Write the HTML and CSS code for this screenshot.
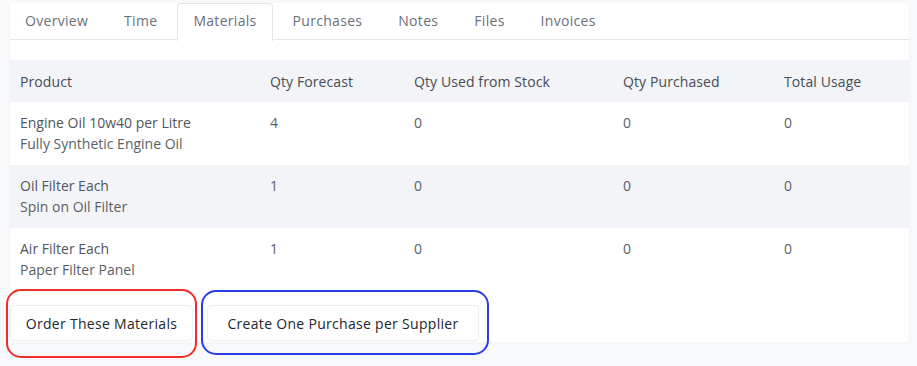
FILE: index.html
```html
<!DOCTYPE html>
<html>
<head>
<meta charset="utf-8">
<link rel="stylesheet" href="styles.css">
</head>
<body>
<div class="card">
  <div class="tabs">
    <div class="tab">Overview</div>
    <div class="tab">Time</div>
    <div class="tab active">Materials</div>
    <div class="tab">Purchases</div>
    <div class="tab">Notes</div>
    <div class="tab">Files</div>
    <div class="tab">Invoices</div>
  </div>
  <table class="materials">
    <thead>
      <tr>
        <th class="c1">Product</th>
        <th class="c2">Qty Forecast</th>
        <th class="c3">Qty Used from Stock</th>
        <th class="c4">Qty Purchased</th>
        <th class="c5">Total Usage</th>
      </tr>
    </thead>
    <tbody>
      <tr>
        <td><div>Engine Oil 10w40 per Litre</div><div>Fully Synthetic Engine Oil</div></td>
        <td>4</td><td>0</td><td>0</td><td>0</td>
      </tr>
      <tr class="alt">
        <td><div>Oil Filter Each</div><div>Spin on Oil Filter</div></td>
        <td>1</td><td>0</td><td>0</td><td>0</td>
      </tr>
      <tr>
        <td><div>Air Filter Each</div><div>Paper Filter Panel</div></td>
        <td>1</td><td>0</td><td>0</td><td>0</td>
      </tr>
    </tbody>
  </table>
  <div class="actions">
    <span class="mark red"><button class="btn b1">Order These Materials</button></span>
    <span class="mark blue"><button class="btn b2">Create One Purchase per Supplier</button></span>
  </div>
</div>
</body>
</html>
```
FILE: styles.css
```css
html, body {
  margin: 0;
  padding: 0;
  background: #f8f9fb;
}
body {
  font-family: "Open Sans", "Liberation Sans", sans-serif;
  font-size: 14px;
  color: #555a62;
  min-height: 366px;
  padding-top: 3px;
  box-sizing: border-box;
}
.card {
  margin: 0 0 0 10px;
  width: 899px;
  height: 339px;
  background: #fff;
  box-shadow: 0 1px 3px rgba(40, 50, 80, 0.04);
  box-sizing: border-box;
}
.tabs {
  display: flex;
  gap: 5px;
  height: 36px;
  border-bottom: 1px solid #e4e6ea;
  box-sizing: content-box;
}
.tab {
  padding: 0 15px;
  line-height: 34px;
  color: #6b7079;
  letter-spacing: 0.3px;
  border: 1px solid transparent;
  border-bottom: none;
  border-radius: 4px 4px 0 0;
  margin-left: -1px;
}
.tab.active {
  border-color: #e1e4e8;
  background: #fff;
  height: 37px;
  margin-bottom: -1px;
  position: relative;
}
.materials {
  margin-top: 20px;
  width: 100%;
  border-collapse: collapse;
  table-layout: fixed;
}
.materials th {
  background: #f3f4f8;
  height: 42px;
  padding: 0 10px;
  text-align: left;
  font-weight: 400;
  color: #474c54;
  letter-spacing: 0.1px;
}
.c1 { width: 230px; }
.c2 { width: 124px; }
.c3 { width: 189px; }
.c4 { width: 141px; }
.materials td {
  vertical-align: top;
  padding: 10px 10px 11px;
  line-height: 21px;
  color: #5a5f66;
}
.materials td div:first-child {
  color: #50555c;
}
.materials tr.alt td {
  background: #f3f4f8;
}
.actions {
  display: flex;
  gap: 14px;
  margin-top: 14px;
}
.mark {
  position: relative;
  display: inline-block;
}
.mark::after {
  content: "";
  position: absolute;
  border-radius: 15px;
  pointer-events: none;
}
.mark.red::after {
  left: -4px;
  right: -4px;
  top: -16px;
  bottom: -17px;
  border: 2.5px solid #ef2f27;
}
.mark.blue::after {
  left: -6px;
  right: -10px;
  top: -15px;
  bottom: -14px;
  border: 2.5px solid #2a3ee8;
}
.btn {
  font: inherit;
  color: #23262b;
  letter-spacing: 0.3px;
  background: #fff;
  border: 1px solid #eceef2;
  border-radius: 4px;
  height: 36px;
  padding: 0;
  text-align: center;
  cursor: pointer;
}
.b1 { width: 183px; }
.b2 { width: 272px; }
```
